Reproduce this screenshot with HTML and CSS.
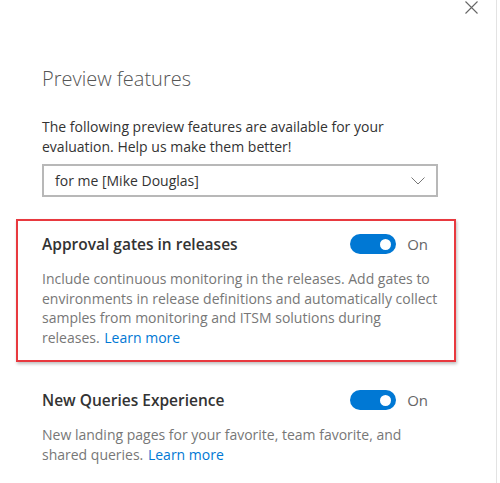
FILE: index.html
```html
<!DOCTYPE html>
<html lang="en">
<head>
  <meta charset="UTF-8">
  <meta name="viewport" content="width=device-width, initial-scale=1.0">
  <title>Preview features</title>
  <link rel="stylesheet" href="styles.css">
</head>
<body>
  <div class="panel">
    <div class="topbar">
      <button class="close" aria-label="Close">
        <svg width="13" height="13" viewBox="0 0 13 13">
          <path d="M0.5 0.5 L12.5 12.5 M12.5 0.5 L0.5 12.5" stroke="#666" stroke-width="1.1" fill="none"/>
        </svg>
      </button>
    </div>

    <h1 class="title">Preview features</h1>
    <p class="intro">The following preview features are available for your evaluation. Help us make them better!</p>

    <div class="select">
      <span>for me [Mike Douglas]</span>
      <svg width="14" height="8" viewBox="0 0 14 8">
        <path d="M0.5 0.5 L7 7 L13.5 0.5" stroke="#777" stroke-width="1" fill="none"/>
      </svg>
    </div>

    <div class="feature highlight">
      <div class="feature-head">
        <h2>Approval gates in releases</h2>
        <div class="toggle-wrap">
          <span class="toggle"><span class="knob"></span></span>
          <span class="state">On</span>
        </div>
      </div>
      <p class="feature-desc">Include continuous monitoring in the releases. Add gates to environments in release definitions and automatically collect samples from monitoring and ITSM solutions during releases. <a href="#">Learn more</a></p>
    </div>

    <div class="feature second">
      <div class="feature-head">
        <h2>New Queries Experience</h2>
        <div class="toggle-wrap">
          <span class="toggle"><span class="knob"></span></span>
          <span class="state">On</span>
        </div>
      </div>
      <p class="feature-desc">New landing pages for your favorite, team favorite, and shared queries. <a href="#">Learn more</a></p>
    </div>
  </div>
</body>
</html>
```

FILE: styles.css
```css
body {
  margin: 0;
  background: #fff;
  font-family: "Open Sans", "Noto Sans", sans-serif;
  color: #333;
}
.panel {
  width: 497px;
  height: 483px;
  border-right: 1px solid #e3e3e3;
  box-sizing: border-box;
  padding: 0 0 0 16px;
  overflow: hidden;
}
.topbar {
  display: flex;
  justify-content: flex-end;
  padding-right: 18px;
  height: 14px;
}
.close {
  background: none;
  border: none;
  padding: 0;
  margin-top: 1px;
  width: 13px;
  height: 13px;
  cursor: pointer;
}
.close svg {
  display: block;
}
.title {
  margin: 51px 0 0 26px;
  font-size: 20px;
  font-weight: 300;
  color: #555;
  line-height: 28px;
}
.intro {
  margin: 24px 0 0 26px;
  width: 380px;
  font-size: 14px;
  line-height: 19.5px;
  color: #333;
}
.select {
  margin: 8px 0 0 26px;
  width: 396px;
  height: 33px;
  box-sizing: border-box;
  border: 2px solid #b8b8b8;
  display: flex;
  align-items: center;
  justify-content: space-between;
  padding: 0 11px 0 11px;
  font-size: 14px;
  color: #333;
}
.feature {
  width: 440px;
  box-sizing: border-box;
  border: 2px solid transparent;
  padding: 12px 16px 13px 24px;
  margin-top: 22px;
}
.feature.highlight {
  border-color: #e8393f;
  box-shadow: 1px 2px 3px rgba(0, 0, 0, 0.25);
}
.feature.second {
  margin-top: 13px;
}
.feature-head {
  display: flex;
  align-items: center;
  justify-content: space-between;
  padding-right: 10px;
}
.feature-head h2 {
  margin: 0;
  font-size: 15.5px;
  font-weight: 600;
  color: #333;
}
.toggle-wrap {
  display: flex;
  align-items: center;
  gap: 11px;
}
.toggle {
  width: 46px;
  height: 20px;
  border-radius: 10px;
  background: #0078d4;
  display: flex;
  align-items: center;
  justify-content: flex-end;
  padding-right: 5px;
  box-sizing: border-box;
}
.knob {
  width: 11px;
  height: 11px;
  border-radius: 50%;
  background: #fff;
}
.state {
  font-size: 15px;
  color: #666;
}
.feature-desc {
  margin: 14px 0 0;
  font-size: 14px;
  line-height: 19.5px;
  color: #777;
}
.feature-desc a {
  margin-left: 1px;
  color: #0078d4;
  text-decoration: none;
}
```
